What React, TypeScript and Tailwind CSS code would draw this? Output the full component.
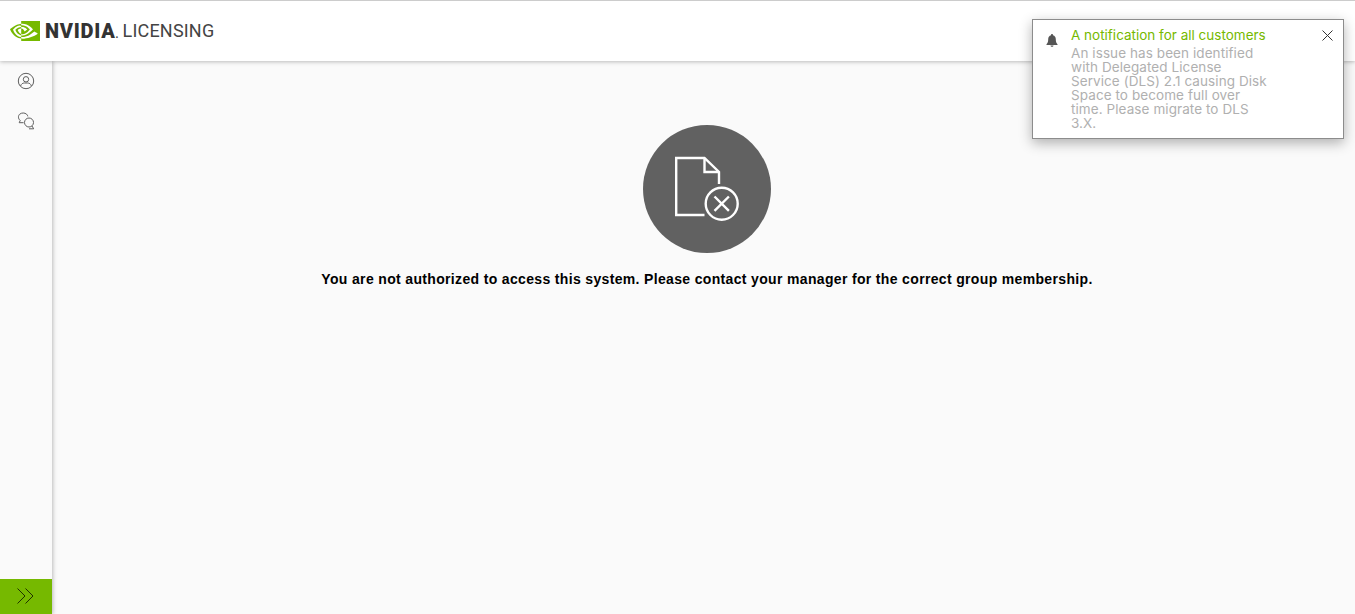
import React from "react";
import { SiNvidia } from "react-icons/si";

function UserIcon() {
  return (
    <svg width="18" height="18" viewBox="0 0 18 18" fill="none" stroke="#5e5e5e" strokeWidth="1" className="block">
      <circle cx="9" cy="9" r="7.700" />
      <circle cx="9" cy="7.300" r="2.700" />
      <path d="M3.600 14c.6-2.200 2.200-3 3.800-3h3.200c1.600 0 3.200.8 3.800 3" />
    </svg>
  );
}

function ChatIcon() {
  return (
    <svg width="18" height="18" viewBox="0 0 18 18" fill="none" stroke="#5e5e5e" strokeWidth="1" className="block">
      <path d="M6.600 10.700H2.200l1-2.200C1 6.700.9 3.700 2.800 2.100c1.900-1.500 5-1.500 6.800.1.700.6 1.100 1.400 1.200 2.200" />
      <circle cx="12" cy="10.500" r="4.500" />
      <path d="M15 14l1.700 2.800H12" />
    </svg>
  );
}

function ChevronsIcon() {
  return (
    <svg width="17" height="16" viewBox="0 0 17 16" fill="none" stroke="#1f3300" strokeWidth="1" className="block">
      <path d="M0.500 0.500L8 8 0.500 15.500" />
      <path d="M8.500 0.500L16 8 8.500 15.500" />
    </svg>
  );
}

function FileErrorIcon() {
  return (
    <svg width="66" height="66" viewBox="0 0 66 66" fill="none" stroke="#fff" strokeWidth="2.400" className="block">
      <path d="M30.500 59H2.200V2h28.300l14.500 14v12" />
      <path d="M30.500 2v14H45" />
      <circle cx="47.700" cy="47.700" r="16" />
      <path d="M40.500 40.500l14.400 14.400M54.900 40.500L40.500 54.900" />
    </svg>
  );
}

function BellIcon() {
  return (
    <svg width="12" height="13" viewBox="0 0 12 13" fill="#555" className="block">
      <path d="M6 0c.6 0 1 .4 1 1v.3c1.800.5 2.800 2 2.800 3.900 0 2.500.5 3.800 1.700 5V11H.5v-.8c1.200-1.200 1.700-2.500 1.700-5 0-1.900 1-3.400 2.800-3.900V1c0-.6.4-1 1-1z" />
      <path d="M4.500 11.500h3c0 .8-.7 1.300-1.500 1.300s-1.500-.5-1.500-1.300z" />
    </svg>
  );
}

export default function App() {
  return (
    <div className="relative flex h-[614px] w-full flex-col overflow-hidden bg-[#fafafa] font-['Inter','Liberation_Sans',sans-serif]">
      <header className="relative z-20 flex h-[61px] shrink-0 items-center border-t border-[#cccccc] bg-white pb-[1px] pl-[10px] shadow-[0_1px_4px_rgba(0,0,0,0.25)]">
        <SiNvidia className="block shrink-0 text-[#76b900]" size={30} />
        <span className="ml-[5px] font-['Roboto',sans-serif] text-[20px] font-black leading-none tracking-[0.75px] text-[#333333]">NVIDIA</span>
        <span className="mt-[9px] self-center font-['Roboto',sans-serif] text-[10px] font-bold leading-none text-[#333333]">.</span>
        <span className="ml-[4px] font-['Roboto',sans-serif] text-[18px] leading-none tracking-[0.2px] text-[#444444]">LICENSING</span>
      </header>
      <div className="flex min-h-0 flex-1">
        <aside className="relative z-10 flex w-[52px] shrink-0 flex-col items-center bg-[#fafafa] shadow-[1px_0_4px_rgba(0,0,0,0.25)]">
          <div className="mt-[11px] flex flex-col gap-[22px]">
            <UserIcon />
            <ChatIcon />
          </div>
          <div className="mt-auto flex h-[35px] w-full items-center justify-center bg-[#76b900] pb-[1px] pr-[2px]">
            <ChevronsIcon />
          </div>
        </aside>
        <main className="flex flex-1 flex-col items-center pl-[7px] pt-[64px]">
          <div className="flex h-[128px] w-[128px] items-center justify-center rounded-full bg-[#616161]">
            <FileErrorIcon />
          </div>
          <p className="mt-[17px] font-['Liberation_Sans',sans-serif] text-[14px] font-bold leading-[18px] tracking-[0.34px] text-black">
            You are not authorized to access this system. Please contact your manager for the correct group membership.
          </p>
        </main>
      </div>
      <div className="absolute left-[1032px] top-[19px] z-30 flex h-[120px] w-[312px] border border-[#8c8c8c] bg-white pl-[13px] pt-[8px] shadow-[0_4px_12px_rgba(0,0,0,0.3)]">
        <div className="mt-[6px] w-[25px] shrink-0"><BellIcon /></div>
        <div className="w-[200px] shrink-0">
          <div className="text-[13.500px] leading-[15px] text-[#76b900]">A notification for all customers</div>
          <div className="mt-[3px] text-[13.500px] leading-[14px] tracking-[0.08px] text-[#b0b0b0]">
            An issue has been identified with Delegated License Service (DLS) 2.1 causing Disk Space to become full over time. Please migrate to DLS 3.X.
          </div>
        </div>
        <svg width="11" height="11" viewBox="0 0 11 11" fill="none" stroke="#333" strokeWidth="1" className="absolute right-[10px] top-[10px] block">
          <path d="M0.500 0.500l10 10M10.500 0.500l-10 10" />
        </svg>
      </div>
    </div>
  );
}
